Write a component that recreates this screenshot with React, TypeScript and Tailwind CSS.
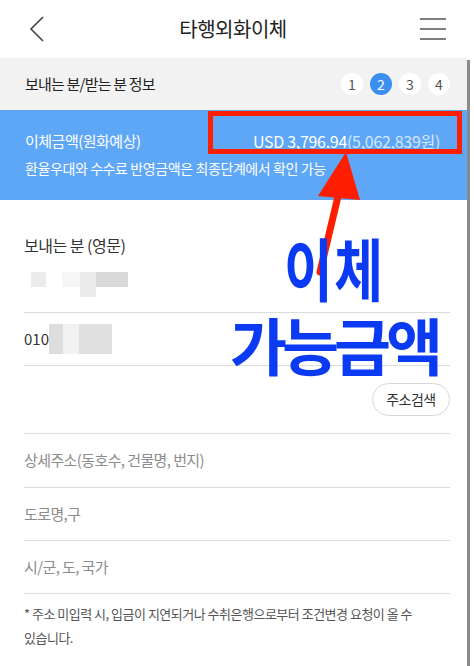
import React from 'react';

const Line = () => <div className="h-px bg-[#dcdcdc]" />;

const Step = ({ n, active }: { n: number; active?: boolean }) => (
  <div
    className={`flex h-[22px] w-[22px] items-center justify-center rounded-full text-[14px] ${
      active ? 'bg-[#3a8ff0] text-white' : 'bg-white text-[#555]'
    }`}
  >
    {n}
  </div>
);

export default function App() {
  return (
    <div
      className="relative h-[666px] w-[474px] overflow-hidden bg-white text-[#222]"
      style={{ fontFamily: '"Noto Sans CJK KR", "Noto Sans", sans-serif' }}
    >
      {/* header */}
      <div className="flex h-[58px] items-center justify-between px-[28px]">
        <svg width="18" height="28" viewBox="0 0 18 28" fill="none" stroke="#444" strokeWidth="1.6">
          <path d="M15 2 L3 14 L15 26" />
        </svg>
        <div className="text-[20px] tracking-[-0.5px] text-[#222]">타행외화이체</div>
        <svg width="26" height="22" viewBox="0 0 26 22" stroke="#555" strokeWidth="1.5">
          <path d="M0 1 H26 M0 11 H26 M0 21 H26" />
        </svg>
      </div>

      <div className="flex">
        <div className="w-[467px]">
          {/* step bar */}
          <div className="flex h-[52px] items-center justify-between bg-[#f2f2f2] pl-[25px] pr-[17px]">
            <div className="text-[15px] tracking-[-0.8px] text-[#222]">보내는 분/받는 분 정보</div>
            <div className="flex gap-[7px]">
              <Step n={1} />
              <Step n={2} active />
              <Step n={3} />
              <Step n={4} />
            </div>
          </div>

          {/* amount */}
          <div className="h-[90px] bg-[#5ea6f6] px-[25px] pt-[19px] text-white">
            <div className="flex items-center justify-between pr-[2px]">
              <div className="text-[15px] tracking-[-0.5px]">이체금액(원화예상)</div>
              <div className="text-[16px] tracking-[-0.3px]">
                USD 3,796.94<span className="text-[#d6e8ff]">(5,062,839원)</span>
              </div>
            </div>
            <div className="mt-[5px] text-[14px] tracking-[-0.4px]">
              환율우대와 수수료 반영금액은 최종단계에서 확인 가능
            </div>
          </div>

          {/* form */}
          <div className="pl-[24px] pr-[17px]">
            <div className="pt-[33px] text-[16px] tracking-[-0.5px] text-[#333]">보내는 분 (영문)</div>
            <div className="flex h-[55px] items-start pt-[15px] pl-[7px]">
              <div className="h-[15px] w-[15px] bg-[#ececec]" />
              <div className="ml-[16px] h-[15px] w-[18px] bg-[#f6f6f6]" />
              <div className="h-[25px] w-[16px] bg-[#ececec]" />
              <div className="h-[15px] w-[32px] bg-[#d9d9d9]" />
            </div>
            <Line />
            <div className="flex h-[52px] items-center">
              <span className="text-[15px] text-[#333]">010</span>
              <div className="h-[30px] w-[14px] bg-[#dddddd]" />
              <div className="h-[30px] w-[16px] bg-[#f2f2f2]" />
              <div className="h-[30px] w-[33px] bg-[#e0e0e0]" />
            </div>
            <Line />
            <div className="flex h-[67px] items-center justify-end">
              <div className="flex h-[33px] w-[78px] items-center justify-center rounded-full border border-[#d8d8d8] text-[14px] tracking-[-0.5px] text-[#333]">
                주소검색
              </div>
            </div>
            <Line />
            <div className="flex h-[53px] items-center text-[15px] tracking-[-0.6px] text-[#8c8c8c]">
              상세주소(동호수, 건물명, 번지)
            </div>
            <Line />
            <div className="flex h-[52px] items-center text-[15px] tracking-[-0.6px] text-[#8c8c8c]">도로명,구</div>
            <Line />
            <div className="flex h-[52px] items-center text-[15px] tracking-[-0.6px] text-[#8c8c8c]">
              시/군, 도, 국가
            </div>
            <Line />
            <div className="w-[410px] break-keep pt-[8px] text-[13px] leading-[24px] tracking-[-0.5px] text-[#555]">
              * 주소 미입력 시, 입금이 지연되거나 수취은행으로부터 조건변경 요청이 올 수 있습니다.
            </div>
          </div>
        </div>
        <div className="w-[7px] pt-[2px]">
          <div className="h-[620px] w-[3px] bg-[#8a8a8a]" />
        </div>
      </div>

      {/* annotation overlays */}
      <div className="absolute left-[208px] top-[111px] h-[43px] w-[254px] border-[5px] border-[#ff1e00]" />
      <svg className="absolute left-0 top-0" width="474" height="666" viewBox="0 0 474 666">
        <path d="M320 272 L340 188" stroke="#ff1e00" strokeWidth="7" strokeLinecap="round" />
        <path d="M346 152 L318 196 L360 200 Z" fill="#ff1e00" />
      </svg>
      <div className="absolute left-[284px] top-[233px] origin-left scale-x-[0.78] whitespace-nowrap text-[68px] font-bold leading-none tracking-[2px] text-[#0a3af2]">
        이체
      </div>
      <div className="absolute left-[230px] top-[313px] whitespace-nowrap text-[62px] font-bold leading-none tracking-[-5px] text-[#0a3af2]">
        가능금액
      </div>
    </div>
  );
}
